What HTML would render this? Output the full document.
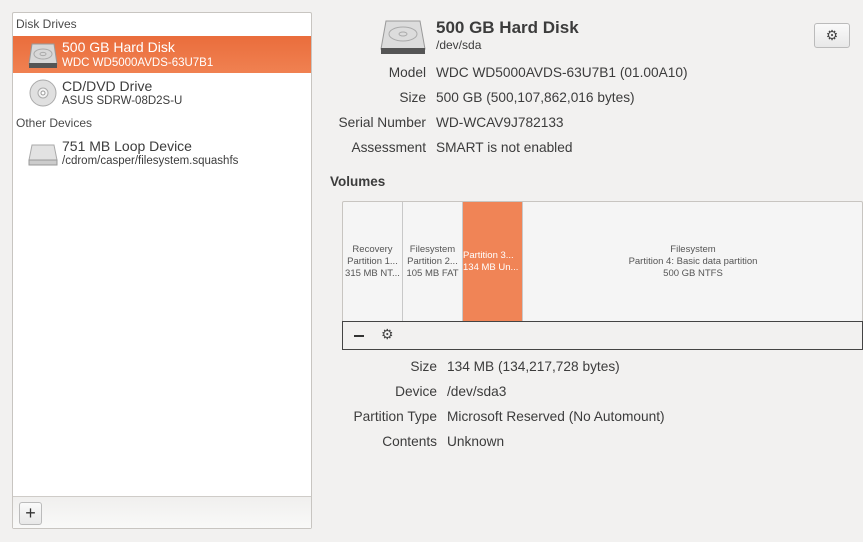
<!DOCTYPE html>
<html><head><meta charset="utf-8"><style>
*{margin:0;padding:0;box-sizing:border-box}
body{width:863px;height:542px;background:#f2f1f0;font-family:"Liberation Sans",sans-serif;color:#3c3c3c;position:relative;overflow:hidden}
.a{position:absolute;white-space:nowrap}
.side{position:absolute;left:12px;top:12px;width:300px;height:517px;border:1px solid #c8c5c1;border-radius:2px;background:#fff}
.tb{position:absolute;left:0;top:483px;width:298px;height:32px;border-top:1px solid #cfccc8;background:linear-gradient(#f0efee,#f9f9f8)}
.sec{font-size:12px;color:#4a4a4a}
.t1{font-size:14px;color:#3c3c3c}
.t2{font-size:11.5px;color:#3c3c3c}
.sel{position:absolute;left:0;top:23px;width:298px;height:37px;background:linear-gradient(#ea6d3c,#f08151)}
.lab{font-size:13.7px;text-align:right;color:#3c3c3c}
.val{font-size:13.7px;color:#3c3c3c}
.part{position:absolute;top:0;height:119px;border-right:1px solid #c8c8c8;font-size:9.5px;text-align:center;line-height:12px;color:#555;display:flex;align-items:center;justify-content:center;overflow:hidden}
</style></head><body>
<div class="side">
  <div class="a sec" style="left:3px;top:4px">Disk Drives</div>
  <div class="sel"></div>
  <svg class="a" style="left:14px;top:28px" width="32" height="30" viewBox="0 0 32 30"><path d="M5 3h22l3 20H2z" fill="#d8d8d8" stroke="#999"/><ellipse cx="16" cy="13" rx="9" ry="5" fill="none" stroke="#aaa"/><ellipse cx="16" cy="13" rx="3" ry="1.6" fill="none" stroke="#aaa"/><rect x="2" y="22" width="28" height="5" fill="#555"/></svg>
  <div class="a t1" style="left:49px;top:26px;color:#fff">500 GB Hard Disk</div>
  <div class="a t2" style="left:49px;top:44px;color:#fff">WDC WD5000AVDS-63U7B1</div>
  <svg class="a" style="left:16px;top:66px" width="28" height="28" viewBox="0 0 28 28"><circle cx="14" cy="14" r="13" fill="#e0e0e0" stroke="#aaa"/><circle cx="14" cy="14" r="5" fill="#f4f4f4" stroke="#aaa"/><circle cx="14" cy="14" r="2" fill="#fff" stroke="#999"/></svg>
  <div class="a t1" style="left:49px;top:65px">CD/DVD Drive</div>
  <div class="a t2" style="left:49px;top:82px">ASUS SDRW-08D2S-U</div>
  <div class="a sec" style="left:3px;top:103px">Other Devices</div>
  <svg class="a" style="left:14px;top:130px" width="32" height="24" viewBox="0 0 32 24"><path d="M5 2h22l3 15H2z" fill="#e2e2e2" stroke="#aaa"/><rect x="2" y="17" width="28" height="5" fill="#ccc" stroke="#999"/></svg>
  <div class="a t1" style="left:49px;top:125px">751 MB Loop Device</div>
  <div class="a t2" style="left:49px;top:142px">/cdrom/casper/filesystem.squashfs</div>
  <div class="tb"><div class="a" style="left:6px;top:5px;width:23px;height:23px;border:1px solid #bbb;border-radius:3px;background:linear-gradient(#fafafa,#e8e8e8);font-size:18px;line-height:20px;text-align:center;color:#333">+</div></div>
</div>

<svg class="a" style="left:378px;top:18px" width="50" height="38" viewBox="0 0 50 38"><path d="M8 3h34l5 28H3z" fill="#dcdcdc" stroke="#999"/><ellipse cx="25" cy="16" rx="14" ry="7" fill="none" stroke="#aaa"/><ellipse cx="25" cy="16" rx="4" ry="2" fill="none" stroke="#aaa"/><rect x="3" y="30" width="44" height="6" fill="#555"/></svg>
<div class="a" style="left:436px;top:18px;font-size:17px;font-weight:bold;color:#3c3c3c">500 GB Hard Disk</div>
<div class="a" style="left:436px;top:38px;font-size:12px">/dev/sda</div>
<div class="a" style="left:814px;top:23px;width:36px;height:25px;border:1px solid #bbb;border-radius:3px;background:linear-gradient(#fafafa,#e8e8e8);text-align:center;font-size:14px;line-height:22px;color:#444">⚙</div>

<div class="a lab" style="right:437px;top:65px">Model</div><div class="a val" style="left:436px;top:65px">WDC WD5000AVDS-63U7B1 (01.00A10)</div>
<div class="a lab" style="right:437px;top:90px">Size</div><div class="a val" style="left:436px;top:90px">500 GB (500,107,862,016 bytes)</div>
<div class="a lab" style="right:437px;top:115px">Serial Number</div><div class="a val" style="left:436px;top:115px">WD-WCAV9J782133</div>
<div class="a lab" style="right:437px;top:140px">Assessment</div><div class="a val" style="left:436px;top:140px">SMART is not enabled</div>
<div class="a" style="left:330px;top:174px;font-size:13.5px;font-weight:bold">Volumes</div>

<div class="a" style="left:342px;top:201px;width:521px;height:149px;border:1px solid #c8c5c1;border-radius:2px;background:#f5f5f5">
  <div class="part" style="left:0;width:60px">Recovery<br>Partition 1...<br>315 MB NT...</div>
  <div class="part" style="left:60px;width:60px">Filesystem<br>Partition 2...<br>105 MB FAT</div>
  <div class="part" style="left:120px;width:60px;background:#f08456;color:#fff;text-align:left;justify-content:flex-start">Partition 3...<br>134 MB Un...</div>
  <div class="part" style="left:180px;width:340px;border-right:none">Filesystem<br>Partition 4: Basic data partition<br>500 GB NTFS</div>
  <div class="a" style="left:-1px;top:119px;width:521px;height:29px;border:1px solid #444;background:#f2f1f0">
    <div class="a" style="left:11px;top:13px;width:10px;height:2px;background:#333"></div>
    <div class="a" style="left:38px;top:4px;font-size:14px;color:#444">⚙</div>
  </div>
</div>

<div class="a lab" style="right:426px;top:359px">Size</div><div class="a val" style="left:447px;top:359px">134 MB (134,217,728 bytes)</div>
<div class="a lab" style="right:426px;top:384px">Device</div><div class="a val" style="left:447px;top:384px">/dev/sda3</div>
<div class="a lab" style="right:426px;top:409px">Partition Type</div><div class="a val" style="left:447px;top:409px">Microsoft Reserved (No Automount)</div>
<div class="a lab" style="right:426px;top:434px">Contents</div><div class="a val" style="left:447px;top:434px">Unknown</div>
</body></html>
